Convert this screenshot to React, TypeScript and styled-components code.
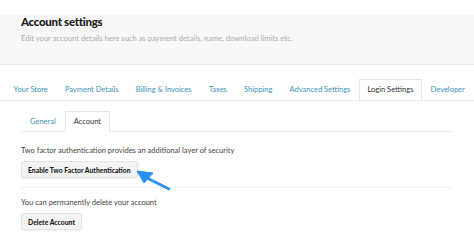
import * as React from "react"
import styled, { createGlobalStyle } from "styled-components"

const GlobalStyle = createGlobalStyle`
  body {
    margin: 0;
    background: #fff;
    font-family: Lato, "Open Sans", sans-serif;
  }
`

const Page = styled.div`
  width: 474px;
  height: 250px;
  overflow: hidden;
  padding-top: 15px;
  box-sizing: border-box;
`

const Header = styled.header`
  background: #f7f7f7;
  border-bottom: 1px solid #ececec;
  padding: 0 21px;
  height: 50px;
  box-sizing: border-box;
`

const Title = styled.h1`
  margin: 0;
  font-size: 11.5px;
  line-height: 12px;
  letter-spacing: -0.3px;
  padding-top: 1px;
  font-weight: 900;
  color: #1c1c1c;
`

const Subtitle = styled.p`
  margin: 5px 0 0;
  font-size: 7.6px;
  line-height: 10px;
  color: #acacac;
`

const TabBar = styled.nav`
  display: flex;
  margin-top: 14px;
  padding-left: 5px;
  border-bottom: 1px solid #ececec;
  height: 21px;
`

const Tab = styled.div<{ $active?: boolean }>`
  padding: 0 7.6px;
  font-size: 7.5px;
  line-height: 20px;
  height: 21px;
  box-sizing: border-box;
  color: ${p => (p.$active ? "#333" : "#3d93bb")};
  background: ${p => (p.$active ? "#fff" : "transparent")};
  border: 1px solid ${p => (p.$active ? "#e6e6e6" : "transparent")};
  border-bottom: none;
  white-space: nowrap;
`

const Body = styled.section`
  margin: 10px 22px 0 21px;
  border-bottom: 1px solid #f0f0f0;
  padding-bottom: 9px;
`

const SubTabBar = styled.nav`
  display: flex;
  border-bottom: 1px solid #ececec;
  height: 20px;
`

const SubTab = styled.div<{ $active?: boolean }>`
  padding: 0 8px;
  font-size: 7.5px;
  line-height: 19px;
  height: 21px;
  box-sizing: border-box;
  color: ${p => (p.$active ? "#333" : "#3d93bb")};
  background: ${p => (p.$active ? "#fff" : "transparent")};
  border: 1px solid ${p => (p.$active ? "#e6e6e6" : "transparent")};
  border-bottom: none;
`

const Section = styled.div`
  position: relative;
  padding-top: 14px;
`

const Text = styled.p`
  margin: 0;
  font-size: 7.5px;
  line-height: 10px;
  color: #444;
`

const Button = styled.button`
  display: block;
  margin-top: 5px;
  height: 17px;
  padding: 0 6px;
  font-family: inherit;
  font-size: 6.8px;
  font-weight: 900;
  color: #1c1c1c;
  background: #f4f4f4;
  border: 1px solid #e4e4e4;
  border-radius: 2px;
  box-shadow: 0 1px 1px rgba(0, 0, 0, 0.05);
`

const Arrow = styled.svg`
  position: absolute;
  left: 112px;
  top: 34px;
`

const Footer = styled.div`
  padding: 10px 0 0 21px;
`

const tabs = [
  "Your Store",
  "Payment Details",
  "Billing & Invoices",
  "Taxes",
  "Shipping",
  "Advanced Settings",
  "Login Settings",
  "Developer",
]

export default function App() {
  return (
    <Page>
      <GlobalStyle />
      <Header>
        <Title>Account settings</Title>
        <Subtitle>Edit your account details here such as payment details, name, download limits etc.</Subtitle>
      </Header>
      <TabBar>
        {tabs.map(t => (
          <Tab key={t} $active={t === "Login Settings"}>
            {t}
          </Tab>
        ))}
      </TabBar>
      <Body>
        <SubTabBar>
          <SubTab>General</SubTab>
          <SubTab $active>Account</SubTab>
        </SubTabBar>
        <Section>
          <Text>Two factor authentication provides an additional layer of security</Text>
          <Button>Enable Two Factor Authentication</Button>
          <Arrow width="40" height="28" viewBox="0 0 40 28">
            <path d="M36 23 L12 11" stroke="#2b8ff2" strokeWidth="2.6" strokeLinecap="round" fill="none" />
            <path d="M4 5 L20 7 L11 17 Z" fill="#2b8ff2" strokeLinejoin="round" stroke="#2b8ff2" strokeWidth="1" />
          </Arrow>
        </Section>
      </Body>
      <Footer>
        <Text>You can permanently delete your account</Text>
        <Button>Delete Account</Button>
      </Footer>
    </Page>
  )
}
